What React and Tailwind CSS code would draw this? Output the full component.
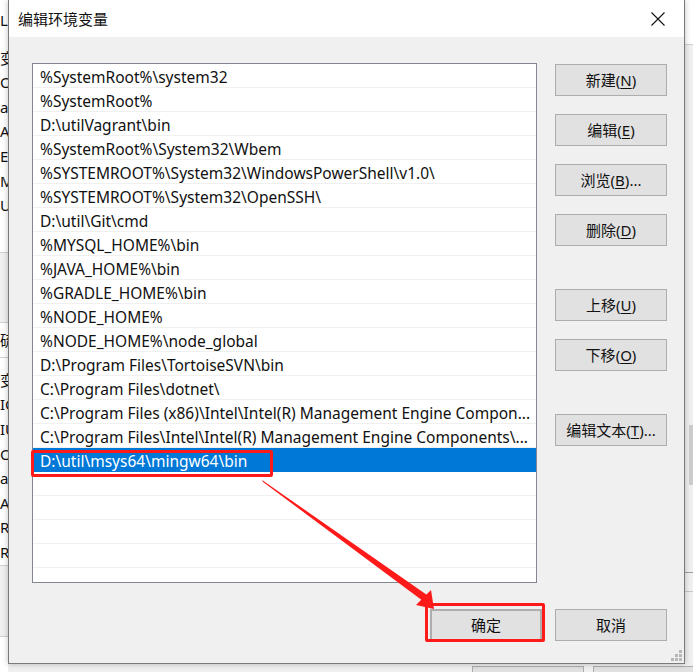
import React from "react";

const paths = [
  "%SystemRoot%\\system32",
  "%SystemRoot%",
  "D:\\utilVagrant\\bin",
  "%SystemRoot%\\System32\\Wbem",
  "%SYSTEMROOT%\\System32\\WindowsPowerShell\\v1.0\\",
  "%SYSTEMROOT%\\System32\\OpenSSH\\",
  "D:\\util\\Git\\cmd",
  "%MYSQL_HOME%\\bin",
  "%JAVA_HOME%\\bin",
  "%GRADLE_HOME%\\bin",
  "%NODE_HOME%",
  "%NODE_HOME%\\node_global",
  "D:\\Program Files\\TortoiseSVN\\bin",
  "C:\\Program Files\\dotnet\\",
  "C:\\Program Files (x86)\\Intel\\Intel(R) Management Engine Compon...",
  "C:\\Program Files\\Intel\\Intel(R) Management Engine Components\\...",
  "D:\\util\\msys64\\mingw64\\bin",
];

const SELECTED = 16;
const TOTAL_ROWS = 22;

const font = { fontFamily: '"Noto Sans", "Noto Sans CJK SC", sans-serif' };

const topLetters = ["变", "Or", "a", "A", "E", "M", "US"];
const lowLetters = ["IC", "IU", "OS", "a", "A", "R", "R"];

const Letter = ({ children }) => (
  <div className="h-[24.6px] shrink-0 text-[15px] leading-[24px] text-[#111] whitespace-nowrap">{children}</div>
);

const WinButton = ({ label, mnemonic, suffix = "", className = "" }) => (
  <button
    className={`h-[32px] w-[112px] shrink-0 border border-[#adadad] bg-[#e1e1e1] text-[15px] text-[#111] flex items-center justify-center ${className}`}
  >
    <span>
      {label}
      {mnemonic && (
        <>
          (<span className="underline underline-offset-2">{mnemonic}</span>)
        </>
      )}
      {suffix}
    </span>
  </button>
);

export default function App() {
  return (
    <div className="relative w-[693px] h-[672px] overflow-hidden bg-[#f0f0f0]" style={font}>
      {/* window behind the dialog */}
      <div className="flex flex-col w-[8px] h-full bg-white overflow-hidden">
        <div className="h-[8px] shrink-0" />
        <Letter>L</Letter>
        <div className="h-[13px] shrink-0" />
        {topLetters.map((t, i) => (
          <Letter key={i}>{t}</Letter>
        ))}
        <div className="h-[34px] shrink-0" />
        <div className="h-[71px] shrink-0 bg-[#f0f0f0] border-y border-[#d0d0d0]" />
        <div className="h-[35px] shrink-0 text-[15px] leading-[35px] text-[#111] border-b border-[#d0d0d0]">硫</div>
        <div className="h-[10px] shrink-0" />
        <Letter>变</Letter>
        {lowLetters.map((t, i) => (
          <Letter key={i}>{t}</Letter>
        ))}
        <div className="h-[72px] shrink-0 bg-[#f0f0f0] border-y border-[#d0d0d0]" />
      </div>
      <div className="absolute right-0 top-0 w-[9px] h-full bg-[#f0f0f0] flex flex-col">
        <div className="h-[45px] bg-white border-b border-[#d0d0d0]" />
        <div className="h-[380px]" />
        <div className="ml-[5px] w-[4px] h-[60px] bg-[#cdcdcd]" />
        <div className="h-[87px]" />
        <div className="h-[19px] border-t border-[#a0a0a0]" />
        <div className="border-t border-[#c8c8c8]" />
      </div>
      {/* buttons of the window below */}
      <div className="absolute left-[472px] top-[666px] w-[112px] h-[12px] border border-[#adadad] bg-[#e1e1e1]" />
      <div className="absolute left-[593px] top-[666px] w-[112px] h-[12px] border border-[#adadad] bg-[#e1e1e1]" />

      {/* dialog */}
      <div className="absolute left-[8px] top-0 w-[677px] h-[664px] bg-[#f0f0f0] border-x border-b border-[#7a7a7a] flex flex-col shadow-[0_0_6px_rgba(0,0,0,0.25)]">
        <div className="h-[37px] bg-white flex items-center justify-between pl-[9px] pr-[12px] pt-[1px] shrink-0">
          <span className="text-[15px] text-[#111]" style={{ fontFamily: '"Noto Sans CJK SC", sans-serif' }}>编辑环境变量</span>
          <svg width="16" height="16" viewBox="0 0 16 16" className="mr-[6px]">
            <path d="M1.5 1.5 L14.5 14.5 M14.5 1.5 L1.5 14.5" stroke="#111" strokeWidth="1.1" />
          </svg>
        </div>
        <div className="flex pl-[23px] pt-[26px] gap-[18px]">
          <div className="w-[505px] h-[520px] bg-white border border-[#828790] overflow-hidden flex flex-col">
            {Array.from({ length: TOTAL_ROWS }).map((_, i) => {
              const sel = i === SELECTED;
              return (
                <div
                  key={i}
                  className={`h-[24px] shrink-0 overflow-hidden pl-[7px] text-[15.5px] leading-[26px] whitespace-nowrap border-b ${
                    sel ? "bg-[#0078d7] text-white border-[#0078d7]" : "text-[#111] border-[#f0f0f0]"
                  }`}
                >
                  {paths[i] || ""}
                </div>
              );
            })}
          </div>
          <div className="flex flex-col pt-[1px]">
            <WinButton label="新建" mnemonic="N" />
            <WinButton label="编辑" mnemonic="E" className="mt-[18px]" />
            <WinButton label="浏览" mnemonic="B" suffix="..." className="mt-[18px]" />
            <WinButton label="删除" mnemonic="D" className="mt-[18px]" />
            <WinButton label="上移" mnemonic="U" className="mt-[43px]" />
            <WinButton label="下移" mnemonic="O" className="mt-[18px]" />
            <WinButton label="编辑文本" mnemonic="T" suffix="..." className="mt-[43px]" />
          </div>
        </div>
        <div className="flex justify-end gap-[13px] pr-[17px] pt-[26px]">
          <WinButton label="确定" className="border-2 border-[#0078d7]" />
          <WinButton label="取消" />
        </div>
        <div className="absolute right-[2px] bottom-[2px] grid grid-cols-3 gap-[1px]">
          {[0, 0, 1, 0, 1, 1, 1, 1, 1].map((v, i) => (
            <div key={i} className={`w-[3px] h-[3px] ${v ? "bg-[#b8b8b8]" : ""}`} />
          ))}
        </div>
      </div>

      {/* annotations */}
      <div className="absolute left-[31px] top-[450px] w-[242px] h-[27px] border-[3px] border-[#ff1a1a] rounded-[2px]" />
      <div className="absolute left-[425px] top-[603px] w-[120px] h-[39px] border-[3px] border-[#ff1a1a] rounded-[2px]" />
      <svg className="absolute left-0 top-0" width="693" height="672" viewBox="0 0 693 672">
        <polygon points="262,480 263,482 423,601 427,595" fill="#ff1a1a" />
        <polygon points="434,609 416,605 431,590" fill="#ff1a1a" />
      </svg>
    </div>
  );
}
